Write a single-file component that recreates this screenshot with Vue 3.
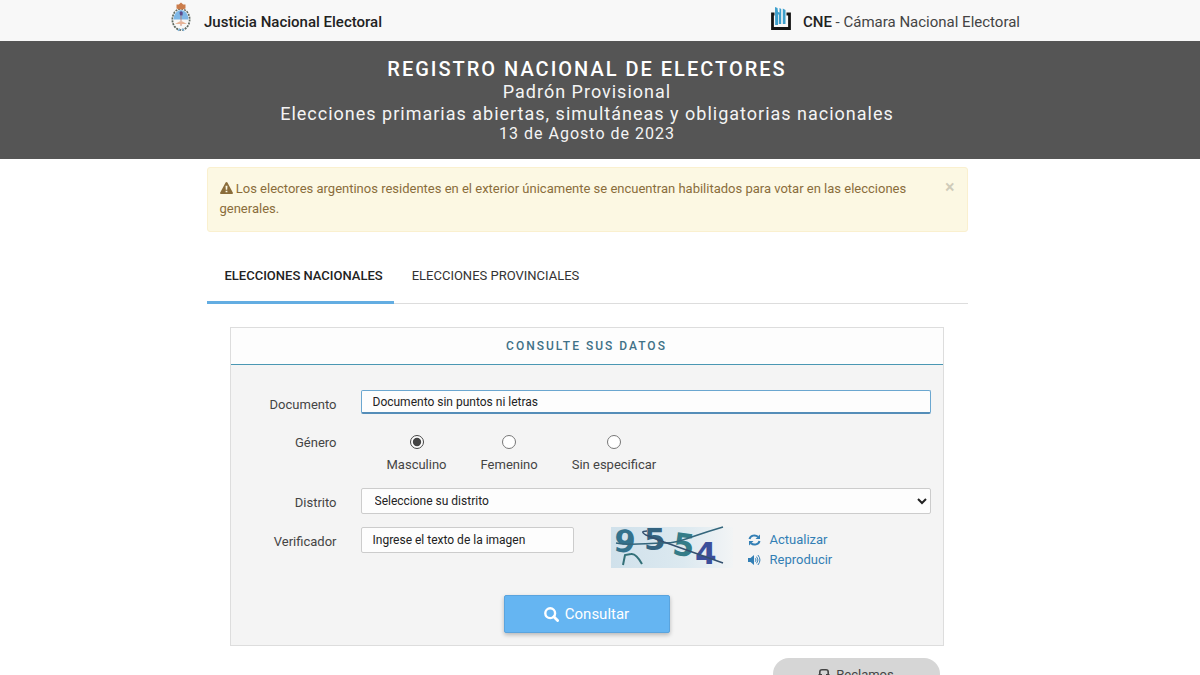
<script setup>
import { ref } from 'vue'

const documento = ref('')
const genero = ref('m')
const distrito = ref('')
const verificador = ref('')
const avisoVisible = ref(true)
const tab = ref('nacionales')

const tabs = [
  { id: 'nacionales', label: 'ELECCIONES NACIONALES' },
  { id: 'provinciales', label: 'ELECCIONES PROVINCIALES' },
]
const generos = [
  { id: 'm', label: 'Masculino' },
  { id: 'f', label: 'Femenino' },
  { id: 'x', label: 'Sin especificar' },
]
</script>

<template>
  <div class="page">
    <header class="topbar">
      <div class="topbar-inner">
        <div class="brand">
          <svg class="crest" width="22" height="30" viewBox="0 0 22 30" aria-hidden="true">
            <ellipse cx="11" cy="17.500" rx="8.600" ry="10.500" fill="none" stroke="#5f6a60" stroke-width="1.800" stroke-dasharray="2 1" />
            <ellipse cx="11" cy="17" rx="7.500" ry="9.500" fill="#f8f8f6" />
            <path d="M3.500 17.500 A7.500 9.500 0 0 1 18.500 17.500 Z" fill="#7fb8e6" />
            <path d="M6.500 6.500 L6.500 2.500 L8.800 2.500 L11 0.500 L13.200 2.500 L15.500 2.500 L15.500 6.500 Q11 8.500 6.500 6.500 Z" fill="#cb7d4c" />
            <path d="M9.500 10.500 L11 9 L12.800 10.500 L12.500 13.500 H10 Z" fill="#5b4b8c" />
            <path d="M11 13.500 V24" stroke="#b9796a" stroke-width="0.800" />
            <path d="M5 22 L9.500 19.500 H12.500 L17 22 L12 22 L11 23 L10 22 Z" fill="#e8b497" />
            <path d="M8 28.800 L10 26.800 M14 28.800 L12 26.800" stroke="#7db4dc" stroke-width="1.500" />
          </svg>
          <strong>Justicia Nacional Electoral</strong>
        </div>
        <div class="brand">
          <svg class="cne" width="20" height="24" viewBox="0 0 20 24" aria-hidden="true">
            <path d="M3.500 7 H1.500 V21.500 H18.500 V7 H15.500" fill="none" stroke="#141414" stroke-width="2.800" />
            <path d="M4 0 L6.500 1 L7 5 L10.200 6 V17 H7.800 V8 L7 7 V18 H4.200 Z" fill="#3d9fcc" />
            <path d="M8.500 1 L10.200 2 V6 H8.500 Z" fill="#3d9fcc" />
            <path d="M11.800 1.500 L14.500 3 V17 H11.800 Z" fill="#3d9fcc" />
          </svg>
          <span><strong>CNE</strong> - Cámara Nacional Electoral</span>
        </div>
      </div>
    </header>

    <section class="hero">
      <h1>REGISTRO NACIONAL DE ELECTORES</h1>
      <p>Padrón Provisional</p>
      <p>Elecciones primarias abiertas, simultáneas y obligatorias nacionales</p>
      <p class="date">13 de Agosto de 2023</p>
    </section>

    <main class="content">
      <div v-if="avisoVisible" class="alert" role="alert">
        <p>
          <svg class="warn" width="13" height="12" viewBox="0 0 13 12" aria-hidden="true">
            <path fill-rule="evenodd" d="M6.500 0 Q7.100 0 7.400 0.600 L12.900 10.700 Q13.200 12 12 12 H1 Q-0.200 12 0.100 10.700 L5.600 0.600 Q5.900 0 6.500 0 Z M5.500 3.800 L5.800 7.800 H7.200 L7.500 3.800 Z M5.600 8.700 V10.300 H7.400 V8.700 Z" fill="currentColor" />
          </svg>
          Los electores argentinos residentes en el exterior únicamente se encuentran habilitados para votar en las elecciones generales.
        </p>
        <button type="button" class="close" aria-label="Cerrar" @click="avisoVisible = false">×</button>
      </div>

      <nav class="tabs">
        <button v-for="t in tabs" :key="t.id" type="button" :class="{ active: tab === t.id }" @click="tab = t.id">{{ t.label }}</button>
      </nav>

      <form class="panel" @submit.prevent>
        <h2>CONSULTE SUS DATOS</h2>
        <div class="fields">
          <label for="documento">Documento</label>
          <input id="documento" v-model="documento" class="control current" type="text" placeholder="Documento sin puntos ni letras" />

          <span id="genero" class="label">Género</span>
          <div class="radios" role="radiogroup" aria-labelledby="genero">
            <label v-for="g in generos" :key="g.id">
              <input v-model="genero" type="radio" name="genero" :value="g.id" />
              <span>{{ g.label }}</span>
            </label>
          </div>

          <label for="distrito">Distrito</label>
          <select id="distrito" v-model="distrito" class="control">
            <option value="">Seleccione su distrito</option>
          </select>

          <label for="verificador">Verificador</label>
          <div class="verify">
            <input id="verificador" v-model="verificador" class="control" type="text" placeholder="Ingrese el texto de la imagen" />
            <svg class="captcha" width="122" height="42" viewBox="0 0 122 42" role="img" aria-label="Imagen de verificación">
              <defs>
                <linearGradient id="fade" x1="0" x2="1" y1="0" y2="0">
                  <stop offset="0" stop-color="#d0e1eb" />
                  <stop offset="0.600" stop-color="#dce9f0" />
                  <stop offset="1" stop-color="#f2f4f5" />
                </linearGradient>
              </defs>
              <rect width="122" height="41" fill="url(#fade)" />
              <g class="digits">
                <text x="3" y="25" fill="#34728c" transform="rotate(6 12 14)">9</text>
                <text x="33" y="23" fill="#34637f">5</text>
                <text x="62" y="29" fill="#347c88" transform="rotate(8 73 18)">5</text>
                <text x="84" y="37" fill="#3b4f9a">4</text>
              </g>
              <path d="M5 16 C20 19 34 16 52 16 S74 11 112 0" fill="none" stroke="#34667c" stroke-width="1.500" />
              <path d="M36 4 Q28 4 35 8 L53 15 L112 36" fill="none" stroke="#34506f" stroke-width="1.500" />
              <path d="M12 38 L14 28 L20 27 Q25 26 31 37" fill="none" stroke="#337078" stroke-width="2" />
            </svg>
            <div class="links">
              <a href="#actualizar">
                <svg width="13" height="12" viewBox="0 0 13 12" aria-hidden="true">
                  <g fill="none" stroke="currentColor" stroke-width="2">
                    <path d="M1.500 5 A5 4.500 0 0 1 10 2.800" />
                    <path d="M11.500 7 A5 4.500 0 0 1 3 9.200" />
                  </g>
                  <path d="M12 0.500 V5 H7.500 Z M1 11.500 V7 H5.500 Z" fill="currentColor" />
                </svg>
                Actualizar
              </a>
              <a href="#reproducir">
                <svg width="13" height="12" viewBox="0 0 13 12" aria-hidden="true">
                  <path d="M0 4 H2.500 L6 1 V11 L2.500 8 H0 Z" fill="currentColor" />
                  <path d="M7.300 4.300 Q8.800 6 7.300 7.700 M8.600 2.700 Q11.400 6 8.600 9.300 M9.900 1 Q14 6 9.900 11" fill="none" stroke="currentColor" stroke-width="1" />
                </svg>
                Reproducir
              </a>
            </div>
          </div>
        </div>
        <button type="submit" class="submit">
          <svg width="15" height="15" viewBox="0 0 15 15" aria-hidden="true">
            <circle cx="6.200" cy="6.200" r="4.900" fill="none" stroke="currentColor" stroke-width="2.400" />
            <path d="M9.800 9.800 L13.600 13.600" stroke="currentColor" stroke-width="2.800" stroke-linecap="round" />
          </svg>
          Consultar
        </button>
      </form>

      <button type="button" class="claims">
        <svg width="12" height="13" viewBox="0 0 12 13" aria-hidden="true">
          <path d="M1.800 8 V4 Q1.800 1.800 4 1.800 H8 Q10.200 1.800 10.200 4 V8" fill="none" stroke="currentColor" stroke-width="1.600" />
          <path d="M0.500 6 H4 V10.500 H1.500 Q0.500 10.500 0.500 9.500 Z M11.500 6 H8 V10.500 H10.500 Q11.500 10.500 11.500 9.500 Z" fill="currentColor" />
          <path d="M10.500 10 V12.300 H6" fill="none" stroke="currentColor" stroke-width="1" />
        </svg>
        Reclamos
      </button>
    </main>
  </div>
</template>

<style>
body {
  margin: 0;
  background: #fff;
}
</style>

<style scoped>
.page,
.page button,
.page input,
.page select {
  font-family: Roboto, "Liberation Sans", sans-serif;
}
.page {
  color: #444;
  font-size: 13px;
  line-height: 20px;
}
.page * {
  box-sizing: border-box;
}
h1, h2, p {
  margin: 0;
}
strong {
  font-weight: 500;
  color: #222;
}
.topbar {
  background: #f8f8f8;
}
.topbar-inner {
  display: flex;
  justify-content: space-between;
  max-width: 860px;
  height: 41px;
  margin: 0 auto;
  padding: 2px 10px 0 0;
  font-size: 15px;
}
.brand {
  display: flex;
  align-items: center;
  gap: 12px;
}
.crest {
  margin-top: -10px;
}
.cne {
  margin-top: -6px;
}
.hero {
  padding: 16px 26px 16px 0;
  background: #555;
  color: #f4f4f4;
  text-align: center;
}
.hero h1 {
  color: #fff;
  font-size: 20px;
  font-weight: 500;
  line-height: 24px;
  letter-spacing: 2px;
}
.hero p {
  font-size: 18px;
  line-height: 22px;
  letter-spacing: 1px;
}
.hero .date {
  font-size: 16px;
  line-height: 18px;
}
.content {
  display: flex;
  flex-direction: column;
  max-width: 787px;
  margin: 0 auto;
  padding: 8px 26px 0 0;
}
.alert {
  display: flex;
  justify-content: space-between;
  align-items: flex-start;
  gap: 24px;
  padding: 11px 12px 12px;
  border: 1px solid #faf0cf;
  border-radius: 3px;
  background: #fcf8e3;
  color: #8a6d3b;
}
.warn {
  vertical-align: -1px;
}
.close {
  padding: 0;
  border: 0;
  background: none;
  color: #cfcbb9;
  font-size: 18px;
  font-weight: 500;
  line-height: 16px;
}
.tabs {
  display: flex;
  margin-top: 16px;
  border-bottom: 1px solid #ddd;
}
.tabs button {
  padding: 18px 11px 15px 18px;
  margin-bottom: -1px;
  border: 0;
  border-bottom: 3px solid transparent;
  background: none;
  color: #333;
  font-size: 13px;
  line-height: 20px;
}
.tabs .active {
  border-color: #63ade2;
  color: #222;
  font-weight: 500;
}
.panel {
  display: flex;
  flex-direction: column;
  margin: 23px 24px 0 23px;
  border: 1px solid #ddd;
  background: #f4f4f4;
}
.panel h2 {
  padding: 8px 0;
  border-bottom: 1px solid #4a97b3;
  background: #fdfdfd;
  color: #3f7187;
  font-size: 12px;
  font-weight: 500;
  line-height: 20px;
  letter-spacing: 2px;
  text-align: center;
}
.fields {
  display: grid;
  grid-template-columns: 106px minmax(0, 1fr);
  column-gap: 24px;
  row-gap: 13px;
  padding: 25px 12px 0 0;
}
.fields > label,
.fields > .label {
  padding-top: 5px;
  text-align: right;
}
.control {
  width: 100%;
  height: 26px;
  padding: 0 11px;
  border: 1px solid #ccc;
  border-radius: 2px;
  background: #fdfdfd;
  color: #222;
  font-size: 12px;
}
.control::placeholder {
  color: #222;
  opacity: 1;
}
.current {
  height: 24px;
  border-color: #6ba7d0;
  border-bottom: 2px solid #548db8;
  outline: 0;
}
select.control {
  padding: 0 9px;
}
.radios {
  display: flex;
  gap: 34px;
  padding: 7px 0 0 26px;
}
.radios label {
  display: flex;
  flex-direction: column;
  align-items: center;
  gap: 6px;
}
.radios input {
  width: 14px;
  height: 14px;
  margin: 0;
  accent-color: #444;
}
.verify {
  display: flex;
  align-items: flex-start;
}
.verify .control {
  flex: 0 1 213px;
}
.captcha {
  flex: none;
  margin-left: 37px;
  overflow: visible;
}
.digits {
  font-family: "DejaVu Sans", sans-serif;
  font-size: 31px;
  font-weight: 700;
}
.links {
  display: flex;
  flex-direction: column;
  padding: 3px 0 0 15px;
}
.links a {
  display: flex;
  align-items: center;
  gap: 9px;
  color: #337fb5;
  text-decoration: none;
}
.submit {
  display: flex;
  align-items: center;
  justify-content: center;
  gap: 6px;
  align-self: center;
  width: 166px;
  height: 38px;
  margin: 25px 0 12px;
  border: 1px solid #5aa4de;
  border-radius: 2px;
  background: #65b5f2;
  box-shadow: 0 2px 4px rgba(0, 0, 0, 0.25);
  color: #fff;
  font-size: 15px;
}
.claims {
  display: flex;
  align-items: center;
  justify-content: center;
  gap: 6px;
  align-self: flex-end;
  width: 167px;
  height: 32px;
  margin: 12px 28px 0 0;
  border: 0;
  border-radius: 16px;
  background: #d6d6d6;
  color: #444;
  font-size: 13px;
}
</style>
